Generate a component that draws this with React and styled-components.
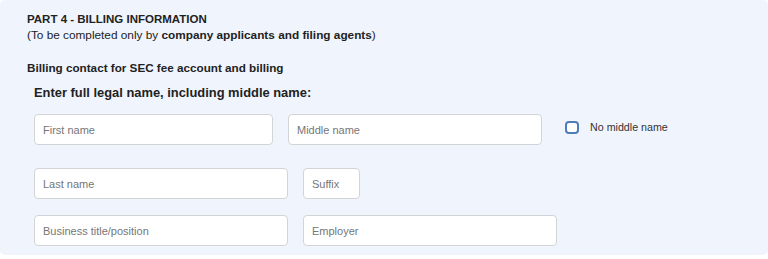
import styled, { createGlobalStyle } from 'styled-components'

const GlobalStyle = createGlobalStyle`
  body {
    margin: 0;
    background: #ffffff;
    font-family: "Liberation Sans", Arial, sans-serif;
  }
`

const Panel = styled.section`
  background: #f0f5fd;
  border-radius: 5px;
  height: 255px;
  box-sizing: border-box;
  padding: 12px 27px 0 27px;
  color: #222;
`

const Heading = styled.div`
  font-size: 11.5px;
  font-weight: bold;
  line-height: 15px;
`

const Note = styled.div`
  font-size: 11.8px;
  line-height: 15px;
  margin-top: 1px;
  b {
    font-weight: bold;
  }
`

const SectionLabel = styled.div`
  font-size: 11.7px;
  font-weight: bold;
  line-height: 15px;
  margin-top: 17px;
`

const NameBlock = styled.div`
  padding-left: 7px;
  margin-top: 10px;
`

const NameLabel = styled.div`
  font-size: 12.9px;
  font-weight: bold;
  line-height: 15px;
`

const Row = styled.div`
  display: flex;
  align-items: flex-start;
  gap: 15px;
  margin-top: ${p => p.$top}px;
`

const Field = styled.input`
  box-sizing: border-box;
  width: ${p => p.$w}px;
  height: 31px;
  padding: 0 8px;
  border: 1px solid #d2d4d8;
  border-radius: 4px;
  background: #fff;
  font-family: "Liberation Sans", Arial, sans-serif;
  font-size: 11px;
  color: #222;
  outline: none;
  &::placeholder {
    color: #767676;
  }
`

const CheckWrap = styled.label`
  display: flex;
  align-items: center;
  gap: 11px;
  margin-left: 8px;
  margin-top: 6px;
  font-size: 10.7px;
  color: #333;
  cursor: pointer;
`

const Box = styled.span`
  box-sizing: border-box;
  width: 14px;
  height: 13px;
  border: 2px solid #4f7db8;
  border-radius: 4px;
  background: #fff;
  margin-top: 1px;
`

export default function App () {
  return (
    <>
      <GlobalStyle />
      <Panel>
        <Heading>PART 4 - BILLING INFORMATION</Heading>
        <Note>(To be completed only by <b>company applicants and filing agents</b>)</Note>
        <SectionLabel>Billing contact for SEC fee account and billing</SectionLabel>
        <NameBlock>
          <NameLabel>Enter full legal name, including middle name:</NameLabel>
          <Row $top={14}>
            <Field $w={239} placeholder='First name' />
            <Field $w={254} placeholder='Middle name' />
            <CheckWrap>
              <Box />
              No middle name
            </CheckWrap>
          </Row>
          <Row $top={23}>
            <Field $w={254} placeholder='Last name' />
            <Field $w={57} placeholder='Suffix' />
          </Row>
          <Row $top={16}>
            <Field $w={254} placeholder='Business title/position' />
            <Field $w={254} placeholder='Employer' />
          </Row>
        </NameBlock>
      </Panel>
    </>
  )
}
